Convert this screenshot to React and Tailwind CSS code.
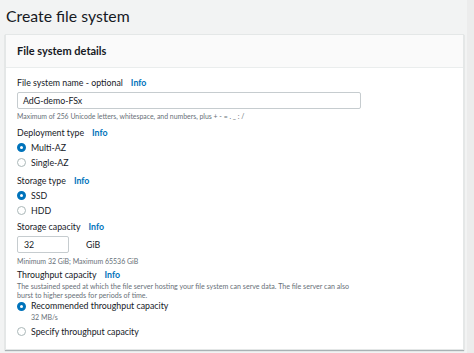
import React from "react";

function Info() {
  return <span className="ml-[8px] font-bold text-[#0073bb]">Info</span>;
}

function Radio({ checked, label, className = "" }) {
  return (
    <div className={"flex h-[15px] items-center " + className}>
      <span
        className={
          "box-border h-[9px] w-[9px] shrink-0 rounded-full bg-white " +
          (checked ? "border-[3px] border-[#0073bb]" : "border border-[#aab7b8]")
        }
      />
      <span className="ml-[5px] text-[8.8px] text-[#16191f]">{label}</span>
    </div>
  );
}

export default function App() {
  return (
    <div className="relative h-[353px] w-[474px] overflow-hidden bg-[#f2f3f3] font-['Lato',sans-serif] text-[#16191f]">
      <div className="absolute right-0 top-0 h-full w-[7px] bg-[#ececec]" />
      <h1 className="h-[34px] pl-[6px] pt-[1px] text-[15.8px] leading-[30px] font-normal">
        Create file system
      </h1>
      <div className="ml-[5px] w-[459px] border border-[#e4e7e7] bg-white shadow-[0_1px_1px_rgba(0,28,36,0.3)]">
        <div className="flex h-[33px] items-center border-b border-[#eaeded] bg-[#fafafa] pl-[11px] text-[11px] font-bold">
          File system details
        </div>
        <div className="flex flex-col px-[11px] pt-[8px] pb-[10px] text-[8.8px] leading-[14px]">
          <div className="flex items-center">
            <span>File system name - optional</span>
            <Info />
          </div>
          <div className="mt-[2px] box-border flex h-[17px] w-[344px] items-center rounded-[2px] border border-[#c6cccf] pl-[5px]">
            AdG-demo-FSx
          </div>
          <div className="mt-[1px] text-[6.9px] leading-[12px] text-[#687078]">
            Maximum of 256 Unicode letters, whitespace, and numbers, plus + - = . _ : /
          </div>

          <div className="mt-[4px] flex items-center">
            <span>Deployment type</span>
            <Info />
          </div>
          <Radio checked label="Multi-AZ" />
          <Radio label="Single-AZ" />

          <div className="mt-[4px] flex items-center">
            <span>Storage type</span>
            <Info />
          </div>
          <Radio checked label="SSD" />
          <Radio label="HDD" />

          <div className="mt-[2px] flex items-center">
            <span>Storage capacity</span>
            <Info />
          </div>
          <div className="mt-[2px] flex items-center">
            <div className="box-border flex h-[17px] w-[52px] items-center rounded-[2px] border border-[#c6cccf] pl-[6px]">
              32
            </div>
            <span className="ml-[17px]">GiB</span>
          </div>
          <div className="mt-[2px] text-[7px] leading-[12px] text-[#687078]">
            Minimum 32 GiB; Maximum 65536 GiB
          </div>

          <div className="mt-[1px] flex items-center">
            <span>Throughput capacity</span>
            <Info />
          </div>
          <div className="text-[7.1px] leading-[9px] text-[#687078]">
            The sustained speed at which the file server hosting your file system can serve data. The file server can also
            <br />
            burst to higher speeds for periods of time.
          </div>
          <div className="flex h-[12px] items-center">
            <span className="box-border h-[9px] w-[9px] shrink-0 rounded-full border-[3px] border-[#0073bb] bg-white" />
            <span className="ml-[5px] text-[8.8px]">Recommended throughput capacity</span>
          </div>
          <div className="pl-[14px] text-[7px] leading-[10px] text-[#687078]">32 MB/s</div>
          <Radio label="Specify throughput capacity" className="mt-[2px] h-[13px]" />
        </div>
      </div>
    </div>
  );
}
